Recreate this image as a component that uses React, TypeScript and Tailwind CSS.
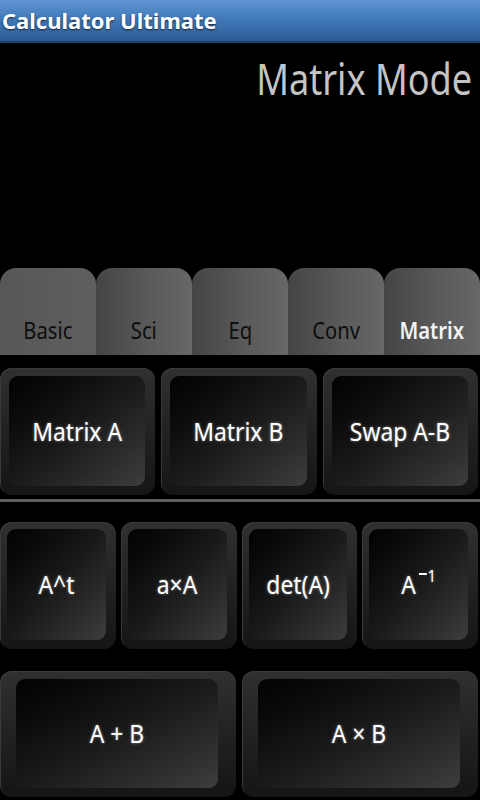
import React from 'react';

const font = { fontFamily: '"Noto Sans", "Open Sans", sans-serif' };

const tabs = ['Basic', 'Sci', 'Eq', 'Conv', 'Matrix'];

// Raised calculator key: lighter bezel with a darker gradient face inside
const Key: React.FC<{ className?: string; faceClass?: string; children: React.ReactNode }> = ({
  className = '',
  faceClass = 'mt-[8px] mb-[9px] ml-[9px] mr-[10px]',
  children,
}) => (
  <div
    className={`flex rounded-[12px] bg-gradient-to-b from-[#303030] via-[#222] to-[#151515] shadow-[inset_1px_1px_0_#3a3a3a] ${className}`}
  >
    <div
      className={`flex flex-1 items-center justify-center rounded-[9px] bg-gradient-to-br from-[#030303] via-[#1a1a1a] to-[#3d3d3d] ${faceClass}`}
    >
      <span className="inline-flex scale-x-[0.88] items-start whitespace-pre text-[26px] font-normal text-white [text-shadow:0_0_3px_rgba(255,255,255,0.5)]">
        {children}
      </span>
    </div>
  </div>
);

export default function App() {
  return (
    <div className="flex h-[800px] w-[480px] flex-col overflow-hidden bg-black" style={font}>
      {/* Title bar */}
      <div className="flex h-[43px] items-center border-b-2 border-[#1d3f66] bg-gradient-to-b from-[#5e95d2] via-[#3f77b6] to-[#2c5d96] px-[2px]">
        <span className="text-[22px] font-bold text-white [text-shadow:0_1px_2px_rgba(0,0,0,0.7)]">
          Calculator Ultimate
        </span>
      </div>

      {/* Display */}
      <div className="flex h-[225px] justify-end pr-[8px] pt-[6px]">
        <span className="origin-right scale-x-[0.84] text-[43px] leading-[60px] text-[#c4c4c4]">Matrix Mode</span>
      </div>

      {/* Mode tabs */}
      <div className="flex h-[87px]">
        {tabs.map((t, i) => (
          <div
            key={t}
            className={`flex flex-1 items-end justify-center rounded-t-[16px] pb-[11px] ${
              i === 0
                ? 'bg-gradient-to-r from-[#575757] to-[#5f5f5f]'
                : 'bg-gradient-to-r from-[#444] via-[#585858] to-[#676767]'
            }`}
          >
            <span
              className={`scale-x-[0.88] text-[23px] leading-[28px] ${
                t === 'Matrix' ? 'font-semibold text-[#f2f2f2]' : 'text-[#0e0e0e]'
              }`}
            >
              {t}
            </span>
          </div>
        ))}
      </div>

      {/* Matrix selection */}
      <div className="mt-[13px] flex h-[127px] gap-[6px] pr-[2px]">
        <Key className="flex-1">Matrix A</Key>
        <Key className="flex-1">Matrix B</Key>
        <Key className="flex-1">Swap A-B</Key>
      </div>

      <div className="mt-[4px] h-[3px] bg-[#5e5e5e]" />

      {/* Unary operations */}
      <div className="mt-[20px] flex h-[127px] gap-[5px] pr-[2px]">
        <Key className="flex-1" faceClass="mt-[7px] mb-[9px] ml-[7px] mr-[10px]">A^t</Key>
        <Key className="flex-1" faceClass="mt-[7px] mb-[9px] ml-[7px] mr-[10px]">a×A</Key>
        <Key className="flex-1" faceClass="mt-[7px] mb-[9px] ml-[7px] mr-[10px]">det(A)</Key>
        <Key className="flex-1" faceClass="mt-[7px] mb-[9px] ml-[7px] mr-[10px]">
          A
          <span className="ml-[3px] mt-[8px] inline-block h-[2px] w-[9px] bg-white" />
          <span className="ml-[1px] -mt-[2px] text-[17px] leading-[26px]">1</span>
        </Key>
      </div>

      {/* Binary operations */}
      <div className="mt-[22px] flex h-[126px] gap-[6px] pr-[2px]">
        <Key className="flex-1" faceClass="mt-[8px] mb-[9px] ml-[16px] mr-[18px]">A + B</Key>
        <Key className="flex-1" faceClass="mt-[8px] mb-[9px] ml-[16px] mr-[18px]">A × B</Key>
      </div>
    </div>
  );
}
